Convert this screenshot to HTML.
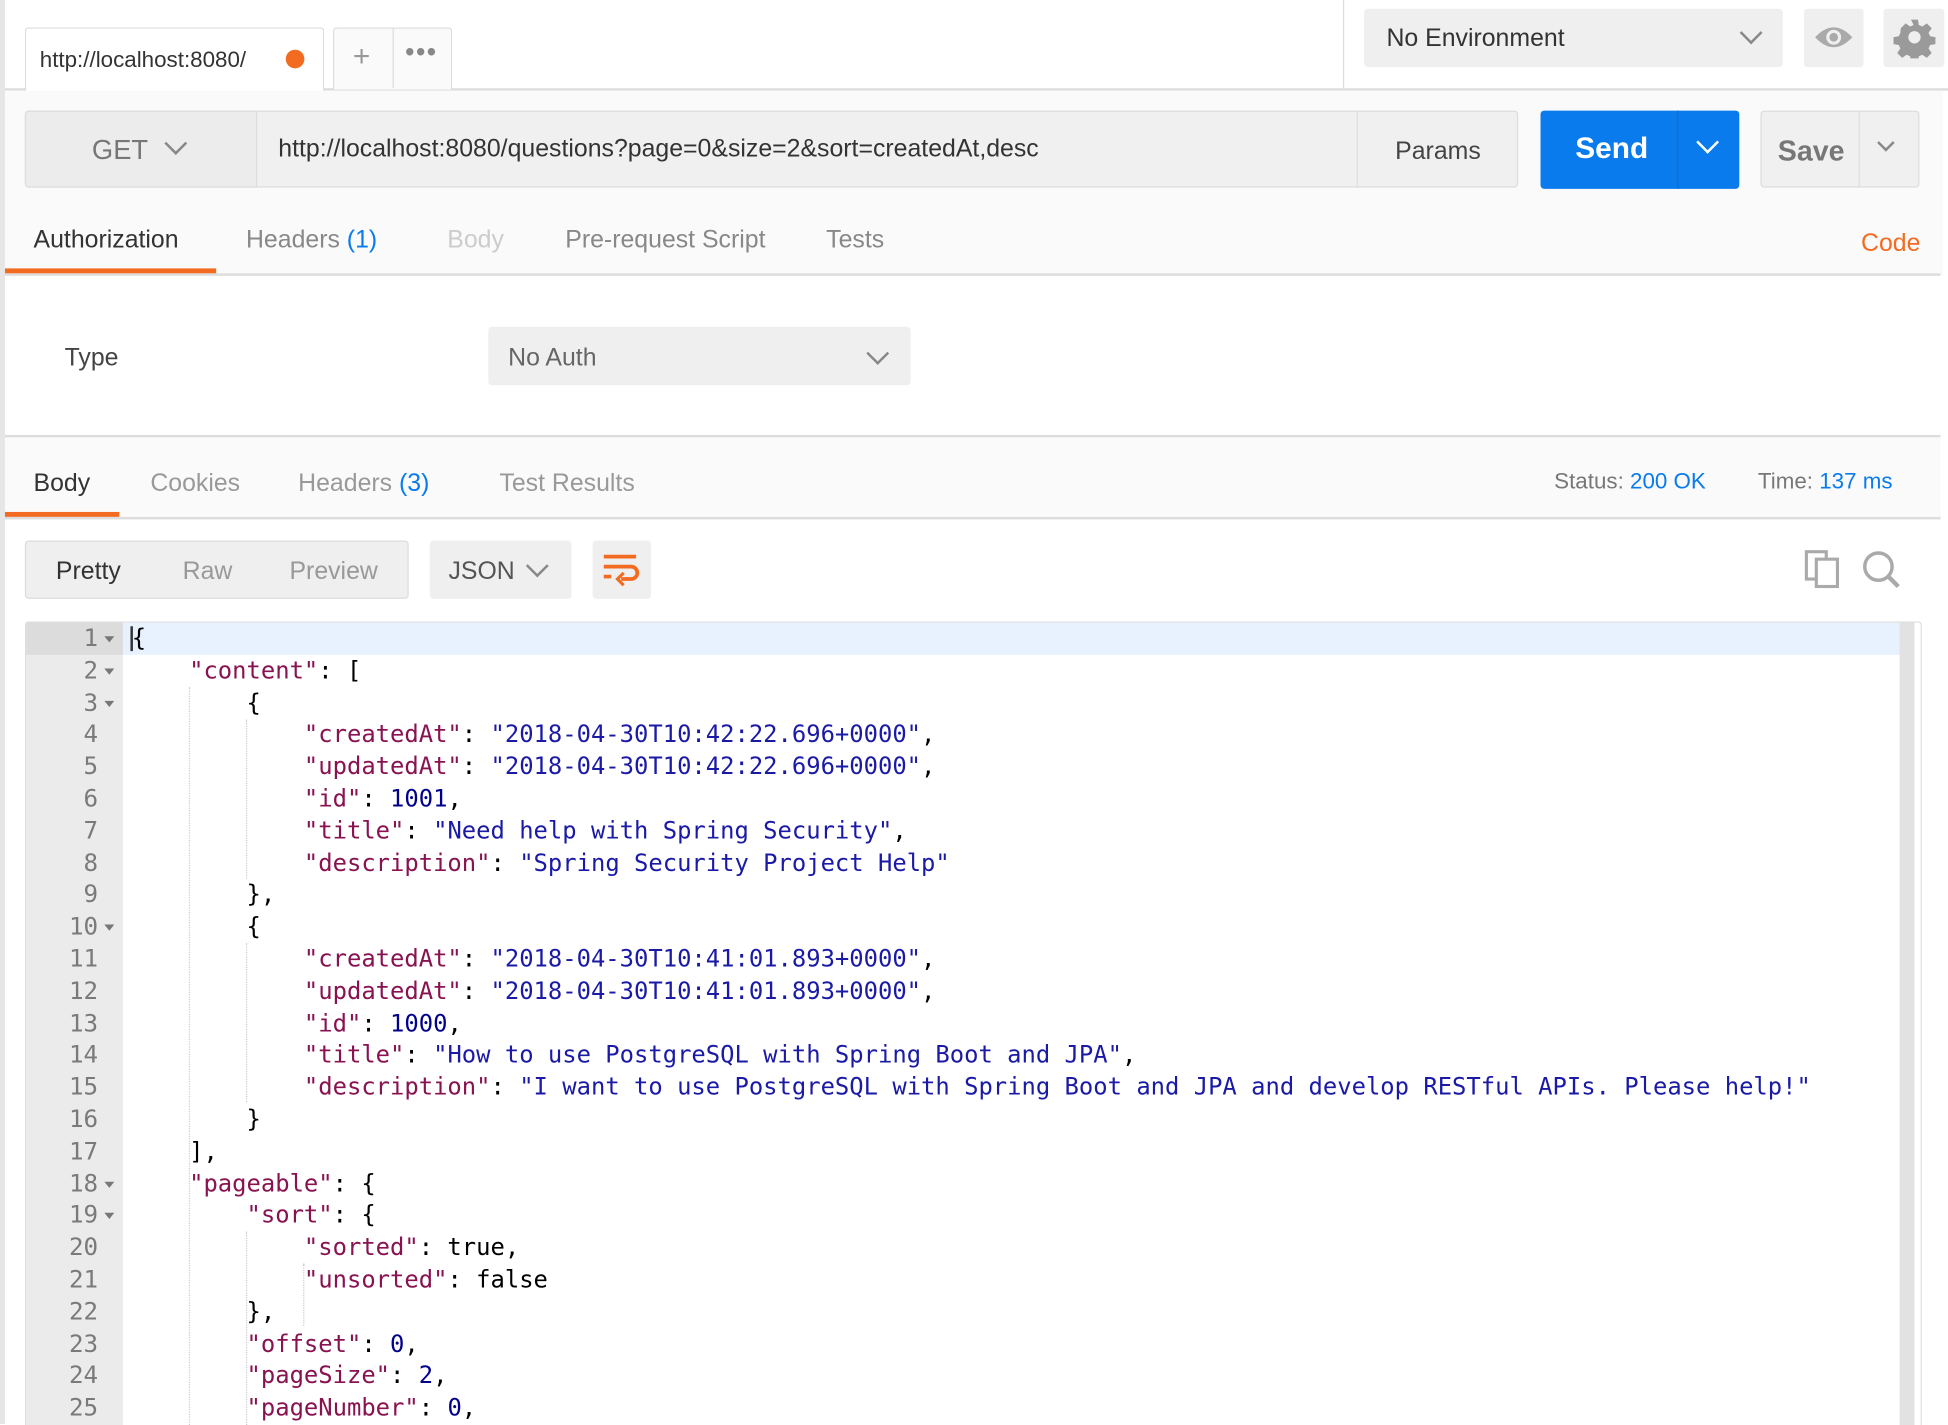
<!DOCTYPE html>
<html><head><meta charset="utf-8"><style>
html,body{margin:0;padding:0;width:1948px;height:1424px;overflow:hidden;background:#fff}
#w{position:absolute;left:0;top:0;width:1568px;height:1146px;transform:scale(1.24235,1.24258);transform-origin:0 0;font-family:"Liberation Sans",sans-serif;color:#505050}
.a{position:absolute}
.t{position:absolute;font-size:20px;white-space:nowrap;line-height:24px}
.chev{position:absolute;width:11px;height:11px;border-right:2px solid #888;border-bottom:2px solid #888;transform:rotate(45deg)}
#code{position:absolute;left:20px;top:500px;width:1525px;height:646px;border:1px solid #ddd;border-bottom:none;border-radius:3px 3px 0 0;overflow:hidden;background:#fff}
#gut{position:absolute;left:0;top:0;width:78px;height:660px;background:#ebebeb}
pre{margin:0;font-family:"DejaVu Sans Mono","Liberation Mono",monospace;font-size:19.2px;line-height:25.8px}
#nums{position:absolute;left:0;top:0;width:58px;text-align:right;color:#7a7a7a;font-size:19.5px}
#src{position:absolute;left:85px;top:0;color:#000}
.k{color:#881350}.s{color:#1a1aa6}.n{color:#00008b}
.fold{position:absolute;left:63px;width:0;height:0;border-left:4px solid transparent;border-right:4px solid transparent;border-top:5px solid #777}
.ig{position:absolute;border-left:1px dotted #ccc}
</style></head><body><div id="w">
<div class="a" style="left:0;top:0;width:4px;height:1146px;background:#e6e6e6"></div>
<div class="a" style="left:4px;top:71px;width:1564px;height:2px;background:#ddd"></div>
<div class="a" style="left:20px;top:22px;width:239px;height:51px;background:#fff;border:1px solid #ddd;border-bottom:none;border-radius:3px 3px 0 0"></div>
<div class="t" style="left:32px;top:36px;font-size:18px;color:#333">http://localhost:8080/</div>
<div class="a" style="left:230px;top:40px;width:15px;height:15px;border-radius:50%;background:#f26b21"></div>
<div class="a" style="left:268px;top:22px;width:94px;height:49px;border:1px solid #ddd;border-bottom:none;border-radius:3px 3px 0 0;background:#fafafa"></div>
<div class="a" style="left:316px;top:23px;width:1px;height:48px;background:#ddd"></div>
<div class="t" style="left:284px;top:34px;font-size:24px;color:#999">+</div>
<div class="t" style="left:326px;top:30px;font-size:22px;color:#888;letter-spacing:1px">•••</div>
<div class="a" style="left:1081px;top:0;width:1px;height:71px;background:#ddd"></div>
<div class="a" style="left:1098px;top:7px;width:337px;height:47px;background:#efefef;border-radius:3px"></div>
<div class="t" style="left:1116px;top:19px;color:#333">No Environment</div>
<div class="chev" style="left:1403px;top:20px"></div>
<div class="a" style="left:1452px;top:7px;width:48px;height:47px;background:#efefef;border-radius:3px"></div>
<svg class="a" style="left:1459px;top:17px" width="34" height="26" viewBox="0 0 34 26"><path d="M2 13 Q17 -3 32 13 Q17 29 2 13Z" fill="#aaa"/><circle cx="17" cy="13" r="6" fill="#efefef"/><circle cx="17" cy="13" r="3.5" fill="#aaa"/></svg>
<div class="a" style="left:1516px;top:7px;width:49px;height:47px;background:#efefef;border-radius:3px"></div>
<svg class="a" style="left:1524px;top:13px" width="34" height="34" viewBox="0 0 24 24"><path fill="#9a9a9a" d="M10 2h4l.5 3 2 .9 2.5-1.8 2.8 2.8-1.8 2.5.9 2 3 .5v4l-3 .5-.9 2 1.8 2.5-2.8 2.8-2.5-1.8-2 .9-.5 3h-4l-.5-3-2-.9-2.5 1.8-2.8-2.8 1.8-2.5-.9-2-3-.5v-4l3-.5.9-2L4.2 6.9 7 4.1l2.5 1.8 2-.9z"/><circle cx="12" cy="12" r="3.5" fill="#efefef"/></svg>
<div class="a" style="left:4px;top:73px;width:1560px;height:148px;background:#fafafa"></div>
<div class="a" style="left:20px;top:89px;width:1202px;height:62px;background:#f0f0f0;border:1px solid #ddd;border-radius:3px;box-sizing:border-box"></div>
<div class="a" style="left:20px;top:89px;width:187px;height:62px;background:#ececec;border:1px solid #ddd;border-radius:3px 0 0 3px;box-sizing:border-box"></div>
<div class="t" style="left:74px;top:109px;font-size:22px;color:#777">GET</div>
<div class="chev" style="left:135px;top:109px"></div>
<div class="t" style="left:224px;top:108px;color:#333">http://localhost:8080/questions?page=0&amp;size=2&amp;sort=createdAt,desc</div>
<div class="a" style="left:1092px;top:89px;width:1px;height:62px;background:#ddd"></div>
<div class="t" style="left:1123px;top:110px;color:#444">Params</div>
<div class="a" style="left:1240px;top:89px;width:160px;height:63px;background:#097bed;border-radius:3px"></div>
<div class="a" style="left:1350px;top:89px;width:1px;height:63px;background:#0a6fd4"></div>
<div class="t" style="left:1268px;top:108px;font-size:24px;color:#fff;font-weight:bold">Send</div>
<div class="chev" style="left:1368px;top:108px;border-color:#fff"></div>
<div class="a" style="left:1417px;top:89px;width:128px;height:62px;background:#f0f0f0;border:1px solid #ddd;border-radius:3px;box-sizing:border-box"></div>
<div class="a" style="left:1496px;top:89px;width:1px;height:62px;background:#ddd"></div>
<div class="t" style="left:1431px;top:109px;font-size:23px;color:#777;font-weight:bold">Save</div>
<div class="chev" style="left:1513px;top:110px;width:8px;height:8px"></div>
<div class="t" style="left:27px;top:181px;color:#333">Authorization</div>
<div class="t" style="left:198px;top:181px;color:#888">Headers <span style="color:#097bed">(1)</span></div>
<div class="t" style="left:360px;top:181px;color:#ccc">Body</div>
<div class="t" style="left:455px;top:181px;color:#888">Pre-request Script</div>
<div class="t" style="left:665px;top:181px;color:#888">Tests</div>
<div class="t" style="left:1498px;top:184px;color:#f26b21">Code</div>
<div class="a" style="left:4px;top:216px;width:170px;height:4px;background:#f26b21"></div>
<div class="a" style="left:4px;top:220px;width:1558px;height:2px;background:#ddd"></div>
<div class="t" style="left:52px;top:276px;color:#444">Type</div>
<div class="a" style="left:393px;top:263px;width:340px;height:47px;background:#efefef;border-radius:3px"></div>
<div class="t" style="left:409px;top:276px;color:#666">No Auth</div>
<div class="chev" style="left:700px;top:278px"></div>
<div class="a" style="left:4px;top:350px;width:1558px;height:2px;background:#ddd"></div>
<div class="a" style="left:4px;top:352px;width:1558px;height:65px;background:#fafafa"></div>
<div class="t" style="left:27px;top:377px;color:#333">Body</div>
<div class="t" style="left:121px;top:377px;color:#999">Cookies</div>
<div class="t" style="left:240px;top:377px;color:#999">Headers <span style="color:#097bed">(3)</span></div>
<div class="t" style="left:402px;top:377px;color:#999">Test Results</div>
<div class="t" style="left:1251px;top:375px;font-size:18px;color:#777">Status: <span style="color:#097bed">200 OK</span></div>
<div class="t" style="left:1415px;top:375px;font-size:18px;color:#777">Time: <span style="color:#097bed">137 ms</span></div>
<div class="a" style="left:4px;top:412px;width:92px;height:4px;background:#f26b21"></div>
<div class="a" style="left:4px;top:416px;width:1558px;height:2px;background:#ddd"></div>
<div class="a" style="left:20px;top:435px;width:309px;height:47px;background:#efefef;border:1px solid #ddd;border-radius:3px;box-sizing:border-box"></div>
<div class="t" style="left:45px;top:448px;color:#333">Pretty</div>
<div class="t" style="left:147px;top:448px;color:#999">Raw</div>
<div class="t" style="left:233px;top:448px;color:#999">Preview</div>
<div class="a" style="left:346px;top:435px;width:114px;height:47px;background:#efefef;border-radius:3px"></div>
<div class="t" style="left:361px;top:448px;color:#555">JSON</div>
<div class="chev" style="left:426px;top:449px"></div>
<div class="a" style="left:477px;top:435px;width:47px;height:47px;background:#efefef;border-radius:3px"></div>
<svg class="a" style="left:484px;top:444px" width="32" height="28" viewBox="0 0 32 28"><path d="M2 4h26M2 12h22a5 5 0 0 1 0 10h-8M2 20h6" stroke="#f26b21" stroke-width="3" fill="none"/><path d="M18 17l-5 5 5 5" stroke="#f26b21" stroke-width="2.5" fill="none"/></svg>
<svg class="a" style="left:1452px;top:442px" width="30" height="32" viewBox="0 0 30 32"><rect x="2" y="2" width="16" height="22" fill="none" stroke="#aaa" stroke-width="2.5"/><rect x="10" y="8" width="17" height="22" fill="#fff" stroke="#aaa" stroke-width="2.5"/></svg>
<svg class="a" style="left:1497px;top:441px" width="36" height="36" viewBox="0 0 36 36"><circle cx="15" cy="15" r="11" fill="none" stroke="#aaa" stroke-width="2.8"/><path d="M23 23l8 8" stroke="#aaa" stroke-width="3.5"/></svg>
<div id="code">
<div id="gut"></div>
<div class="a" style="left:0;top:0;width:78px;height:26px;background:#dcdcdc"></div>
<div class="a" style="left:78px;top:0;width:1430px;height:26px;background:#e8f2fe"></div>
<div class="a" style="left:84px;top:3px;width:2px;height:20px;background:#333"></div>
<div class="a" style="left:1508px;top:0;width:12px;height:646px;background:#e2e2e2"></div>
<div class="fold" style="top:11px"></div><div class="fold" style="top:37px"></div><div class="fold" style="top:63px"></div><div class="fold" style="top:243px"></div><div class="fold" style="top:450px"></div><div class="fold" style="top:475px"></div>
<div class="ig" style="left:131px;top:52px;height:594px"></div>
<div class="ig" style="left:177px;top:78px;height:128px"></div>
<div class="ig" style="left:177px;top:258px;height:128px"></div>
<div class="ig" style="left:177px;top:490px;height:156px"></div>
<div class="ig" style="left:223px;top:516px;height:50px"></div>
<pre id="nums">1
2
3
4
5
6
7
8
9
10
11
12
13
14
15
16
17
18
19
20
21
22
23
24
25
26</pre>
<pre id="src">{
    <span class="k">"content"</span>: [
        {
            <span class="k">"createdAt"</span>: <span class="s">"2018-04-30T10:42:22.696+0000"</span>,
            <span class="k">"updatedAt"</span>: <span class="s">"2018-04-30T10:42:22.696+0000"</span>,
            <span class="k">"id"</span>: <span class="n">1001</span>,
            <span class="k">"title"</span>: <span class="s">"Need help with Spring Security"</span>,
            <span class="k">"description"</span>: <span class="s">"Spring Security Project Help"</span>
        },
        {
            <span class="k">"createdAt"</span>: <span class="s">"2018-04-30T10:41:01.893+0000"</span>,
            <span class="k">"updatedAt"</span>: <span class="s">"2018-04-30T10:41:01.893+0000"</span>,
            <span class="k">"id"</span>: <span class="n">1000</span>,
            <span class="k">"title"</span>: <span class="s">"How to use PostgreSQL with Spring Boot and JPA"</span>,
            <span class="k">"description"</span>: <span class="s">"I want to use PostgreSQL with Spring Boot and JPA and develop RESTful APIs. Please help!"</span>
        }
    ],
    <span class="k">"pageable"</span>: {
        <span class="k">"sort"</span>: {
            <span class="k">"sorted"</span>: true,
            <span class="k">"unsorted"</span>: false
        },
        <span class="k">"offset"</span>: <span class="n">0</span>,
        <span class="k">"pageSize"</span>: <span class="n">2</span>,
        <span class="k">"pageNumber"</span>: <span class="n">0</span>,
</pre>
</div>
</div></body></html>
